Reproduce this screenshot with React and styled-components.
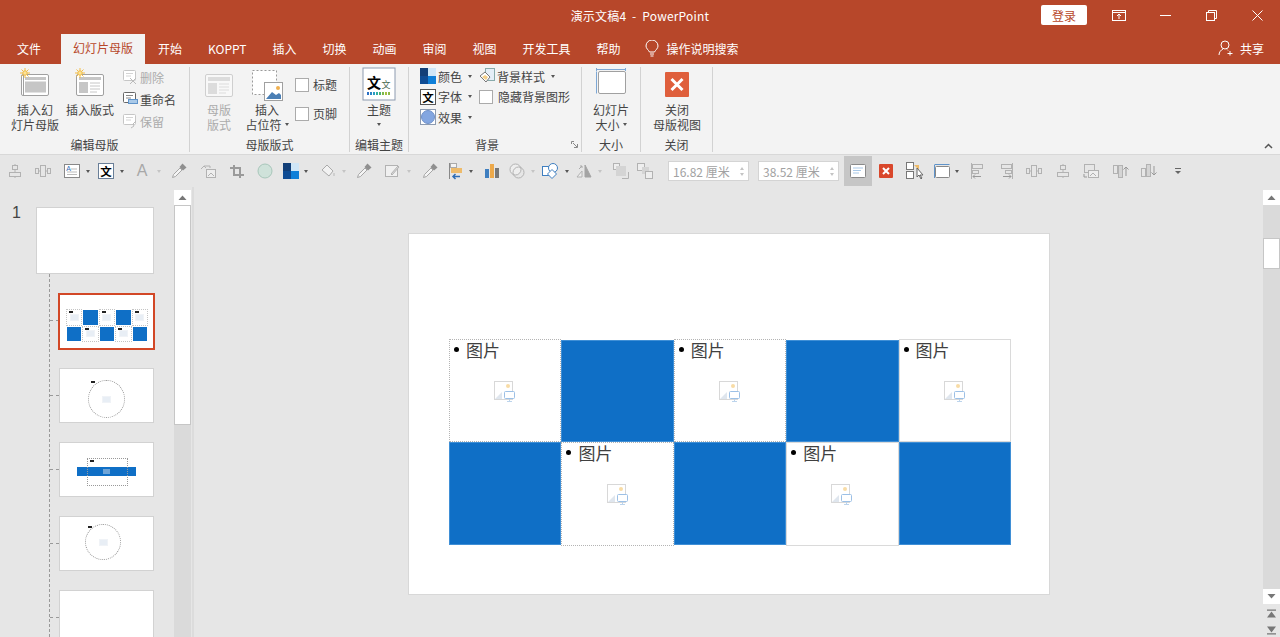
import React from "react";
import styled, { createGlobalStyle } from "styled-components";

const GlobalStyle = createGlobalStyle`
  html, body { margin: 0; padding: 0; height: 100%; overflow: hidden; }
  body { font-family: "Noto Sans CJK SC", "Liberation Sans", sans-serif; font-size: 12px; color: #444; background: #e6e6e6; }
  svg { display: block; flex: none; }
`;

const RED = "#B7472A";
const BLUE = "#0F6FC6";

const Window = styled.div`
  width: 1280px;
  height: 637px;
  display: flex;
  flex-direction: column;
  overflow: hidden;
`;

/* title bar */
const TitleBar = styled.header`
  height: 35px;
  background: ${RED};
  display: grid;
  grid-template-columns: 1fr auto 1fr;
  align-items: center;
  color: #fff;
`;
const Title = styled.div`
  font-size: 12px;
  white-space: pre;
  letter-spacing: 0.2px;
  padding-bottom: 4px;
`;
const WindowControls = styled.div`
  display: flex;
  justify-content: flex-end;
  align-items: flex-start;
  align-self: start;
`;
const LoginButton = styled.button`
  width: 46px;
  height: 20px;
  margin: 5px 9px 0 0;
  padding: 0;
  border: 0;
  border-radius: 2px;
  background: #fff;
  color: ${RED};
  font: inherit;
`;
const ControlButton = styled.div`
  width: 46px;
  height: 30px;
  display: flex;
  align-items: center;
  justify-content: center;
`;

/* tabs */
const TabBar = styled.nav`
  height: 29px;
  background: ${RED};
  display: flex;
  align-items: stretch;
  color: #fff;
`;
const Tab = styled.div`
  padding: 0 ${(p) => p.$pad || 13}px 3px ${(p) => p.$left || p.$pad || 13}px;
  display: flex;
  align-items: center;
  gap: 8px;
  white-space: nowrap;
  ${(p) => p.$active && `background: #f3f3f3; color: ${RED}; margin-top: -1px;`}
`;
const TabSpacer = styled.div`
  flex: 1;
`;
const ShareLabel = styled.span`
  margin-left: -2px;
`;

/* ribbon */
const Ribbon = styled.section`
  height: 90px;
  background: #f3f3f3;
  display: flex;
  padding-top: 3px;
  box-sizing: border-box;
  position: relative;
`;
const Group = styled.div`
  width: ${(p) => p.$w}px;
  height: 85px;
  box-sizing: border-box;
  border-right: 1px solid #d2d2d2;
  display: flex;
  flex-direction: column;
`;
const GroupBody = styled.div`
  flex: 1;
  display: flex;
  padding-left: ${(p) => p.$left || 0}px;
  gap: ${(p) => p.$gap || 0}px;
`;
const GroupLabel = styled.div`
  height: 18px;
  line-height: 21px;
  text-align: center;
  color: #444;
  position: relative;
  padding-right: ${(p) => p.$right || 0}px;
`;
const Launcher = styled.span`
  position: absolute;
  right: 3px;
  top: 7px;
`;
const LargeButton = styled.div`
  width: ${(p) => p.$w}px;
  display: flex;
  flex-direction: column;
  align-items: center;
  line-height: 15px;
  text-align: center;
  white-space: nowrap;
  color: ${(p) => (p.$off ? "#ababab" : "#444")};
`;
const ButtonLabel = styled.div`
  display: flex;
  flex-direction: column;
  align-items: center;
`;
const LabelLine = styled.span`
  display: inline-flex;
  align-items: center;
  gap: 3px;
  height: 15px;
`;
const SmallColumn = styled.div`
  display: flex;
  flex-direction: column;
  margin-left: ${(p) => p.$left || 0}px;
  margin-top: ${(p) => p.$raise || 0}px;
  padding-top: ${(p) => p.$top || 0}px;
  gap: ${(p) => p.$gap || 0}px;
`;
const SmallRow = styled.div`
  height: ${(p) => p.$h || 21}px;
  display: flex;
  align-items: center;
  gap: ${(p) => p.$gap || 2}px;
  white-space: nowrap;
  color: ${(p) => (p.$off ? "#ababab" : "#444")};
`;
const Checkbox = styled.span`
  width: 12px;
  height: 12px;
  display: block;
  flex: none;
  background: #fff;
  border: 1px solid #ababab;
`;
const Caret = styled.i`
  width: 0;
  height: 0;
  display: block;
  flex: none;
  border-left: 2.5px solid transparent;
  border-right: 2.5px solid transparent;
  border-top: 3px solid ${(p) => p.$color || "#555"};
`;
const RowCaret = styled(Caret)`
  margin-left: 4px;
`;
const Collapse = styled.span`
  position: absolute;
  right: 7px;
  bottom: 5px;
`;

/* quick toolbar */
const Toolbar = styled.div`
  height: 33px;
  box-sizing: border-box;
  background: #e6e6e6;
  border-top: 1px solid #d8d8d8;
  display: flex;
  align-items: center;
`;
const Tool = styled.div`
  width: ${(p) => p.$w}px;
  margin-left: ${(p) => p.$gap}px;
  height: 18px;
  display: flex;
  align-items: center;
  justify-content: center;
  flex: none;
`;
const ActiveTool = styled(Tool)`
  height: 30px;
  background: #c6c6c6;
`;
const LetterTool = styled.span`
  font-family: "Liberation Sans", sans-serif;
  font-size: 16px;
  color: #a8a8a8;
`;
const SizeInput = styled.div`
  width: 100%;
  height: 20px;
  box-sizing: border-box;
  background: #fff;
  border: 1px solid #d4d4d4;
  color: #a2a2a2;
  padding: 0 4px;
  display: flex;
  align-items: center;
  justify-content: space-between;
  white-space: nowrap;
`;
const Spinner = styled.span`
  display: flex;
  flex-direction: column;
  gap: 3px;
`;
const SpinUp = styled(Caret)`
  transform: rotate(180deg);
`;

/* main area */
const Main = styled.main`
  flex: 1;
  min-height: 0;
  display: flex;
  background: #e6e6e6;
`;
const Sidebar = styled.aside`
  width: 194px;
  flex: none;
  box-sizing: border-box;
  border-right: 2px solid #dcdcdc;
  display: flex;
  position: relative;
  overflow: hidden;
`;
const ThumbList = styled.div`
  width: 174px;
  flex: none;
  padding-top: 20px;
  display: flex;
  flex-direction: column;
  position: relative;
`;
const MasterRow = styled.div`
  display: flex;
  height: 87px;
  flex: none;
`;
const SlideNo = styled.div`
  width: 36px;
  box-sizing: border-box;
  padding: 1px 0 0 12px;
  font-family: "Liberation Sans", sans-serif;
  font-size: 16px;
  line-height: 10px;
  color: #444;
`;
const MasterThumb = styled.div`
  width: 118px;
  height: 67px;
  box-sizing: border-box;
  background: #fff;
  border: 1px solid #d2d2d2;
`;
const TreeLine = styled.div`
  position: absolute;
  left: 49px;
  top: 87px;
  bottom: 0;
  border-left: 1px dashed #999;
`;
const LayoutRow = styled.div`
  height: ${(p) => (p.$selected ? 75 : 74)}px;
  padding-left: ${(p) => (p.$selected ? 58 : 59)}px;
  margin-top: ${(p) => (p.$selected ? -1 : 0)}px;
  flex: none;
  position: relative;
  &::before {
    content: "";
    position: absolute;
    left: 50px;
    top: 27px;
    width: 9px;
    border-top: 1px dashed #999;
  }
`;
const LayoutThumb = styled.div`
  width: ${(p) => (p.$selected ? 97 : 95)}px;
  height: ${(p) => (p.$selected ? 57 : 55)}px;
  box-sizing: border-box;
  background: #fff;
  border: ${(p) => (p.$selected ? "2px solid #D24726" : "1px solid #d2d2d2")};
  position: relative;
  overflow: hidden;
`;
const MiniGrid = styled.div`
  position: absolute;
  left: 6px;
  top: 14px;
  width: 82px;
  height: 33px;
  display: grid;
  grid-template-columns: repeat(5, 1fr);
  grid-template-rows: repeat(2, 1fr);
`;
const MiniCell = styled.div`
  box-sizing: border-box;
  background: ${(p) => (p.$blue ? BLUE : "#fff")};
  border: ${(p) => (p.$blue ? "0" : "1px dotted #c4c4c4")};
  margin: ${(p) => (p.$blue ? "1px" : "0")};
  position: relative;
  display: flex;
  align-items: center;
  justify-content: center;
`;
const MiniTag = styled.span`
  position: absolute;
  width: 4px;
  height: 2px;
  background: #222;
  left: ${(p) => p.$x}px;
  top: ${(p) => p.$y}px;
`;
const MiniPic = styled.span`
  width: 7px;
  height: 5px;
  display: block;
  background: #e8eef5;
  border: 1px solid #f0f3f7;
`;
const MiniShape = styled.div`
  position: absolute;
  left: ${(p) => p.$x}px;
  top: ${(p) => p.$y}px;
  width: ${(p) => p.$w}px;
  height: ${(p) => p.$h}px;
  box-sizing: border-box;
  display: flex;
  align-items: center;
  justify-content: center;
  border: 1px dotted #999;
  border-radius: ${(p) => (p.$round ? "50%" : "0")};
`;
const MiniBar = styled(MiniShape)`
  border: 0;
  background: ${BLUE};
`;
const MiniBarPic = styled.span`
  width: 7px;
  height: 5px;
  display: block;
  background: #6fa5d8;
`;
const Scrollbar = styled.div`
  width: ${(p) => p.$w}px;
  flex: none;
  padding-top: 3px;
  display: flex;
  flex-direction: column;
`;
const ScrollButton = styled.div`
  height: 15px;
  flex: none;
  background: #fff;
  display: flex;
  align-items: center;
  justify-content: center;
`;
const ScrollTrack = styled.div`
  background: #dadada;
  flex: ${(p) => (p.$fill ? 1 : "none")};
  height: ${(p) => (p.$h ? `${p.$h}px` : "auto")};
`;
const ScrollThumb = styled.div`
  height: ${(p) => p.$h}px;
  flex: none;
  box-sizing: border-box;
  background: #fff;
  border: 1px solid #c6c6c6;
`;
const PageButton = styled.div`
  height: ${(p) => p.$h}px;
  flex: none;
  display: flex;
  align-items: center;
  justify-content: center;
`;
const Workspace = styled.div`
  flex: 1;
  min-width: 0;
  padding: 46px 0 0 214px;
`;
const Slide = styled.div`
  width: 642px;
  height: 362px;
  box-sizing: border-box;
  background: #fff;
  border: 1px solid #d8d8d8;
  padding: 105px 0 0 40px;
`;
const SlideGrid = styled.div`
  width: 562px;
  display: grid;
  grid-template-columns: repeat(5, 112.4px);
  grid-template-rows: 103px 104px;
`;
const BlueCell = styled.div`
  background: ${BLUE};
  border: 1px solid #3f8fd6;
  margin-top: ${(p) => p.$top || 0}px;
  margin-bottom: ${(p) => p.$bottom || 0}px;
  box-sizing: border-box;
`;
const PictureCell = styled.div`
  box-sizing: border-box;
  border: 1px ${(p) => (p.$solid ? "solid #dadada" : "dotted #b4b4b4")};
  display: flex;
  flex-direction: column;
  align-items: center;
`;
const PictureLabel = styled.div`
  align-self: stretch;
  height: 18px;
  padding-left: 4px;
  display: flex;
  align-items: center;
  gap: 7px;
  font-size: 17px;
  color: #404040;
  white-space: nowrap;
`;
const Bullet = styled.i`
  width: 5px;
  height: 5px;
  display: block;
  border-radius: 50%;
  background: #000;
`;
const PictureIcon = styled.div`
  margin-top: 23px;
`;

const Sun = ({ x = 7, y = 6 }) => (
  <g stroke="#f2bd48" strokeWidth="1">
    <path d={`M${x - 5} ${y}h10M${x} ${y - 5}v10M${x - 3.5} ${y - 3.5}l7 7M${x + 3.5} ${y - 3.5}l-7 7`} />
    <circle cx={x} cy={y} r="2.2" fill="#fbe39a" />
  </g>
);

const MasterIcon = () => (
  <svg width="34" height="35" viewBox="0 0 34 35">
    <rect x="3.5" y="7.5" width="27" height="21" rx="1.5" fill="#fff" stroke="#a0a0a0" />
    <path d="M5.5 8v20" stroke="#a0a0a0" />
    <rect x="7" y="10" width="21" height="3" fill="#c6c6c6" />
    <rect x="7" y="14.5" width="21" height="11" fill="#c6c6c6" />
    <Sun />
  </svg>
);
const LayoutIcon = () => (
  <svg width="34" height="35" viewBox="0 0 34 35">
    <rect x="3.5" y="7.5" width="27" height="21" rx="1.5" fill="#fff" stroke="#a0a0a0" />
    <rect x="6" y="10" width="22" height="3" fill="#c6c6c6" />
    <rect x="6" y="15" width="9" height="11" fill="#c6c6c6" />
    <path d="M17 16h10M17 19h10M17 22h10M17 25h7" stroke="#c6c6c6" />
    <Sun />
  </svg>
);
const MasterLayoutIcon = () => (
  <svg width="34" height="35" viewBox="0 0 34 35">
    <rect x="3.5" y="7.5" width="27" height="22" rx="1.5" fill="#f8f8f8" stroke="#cfcfcf" />
    <rect x="6" y="10" width="22" height="4" fill="#dcdcdc" />
    <rect x="6" y="16" width="9" height="11" fill="#dcdcdc" />
    <path d="M17 17h10M17 20h10M17 23h10M17 26h7" stroke="#dcdcdc" />
  </svg>
);
const PlaceholderIcon = () => (
  <svg width="36" height="35" viewBox="0 0 36 35">
    <rect x="3.5" y="3.5" width="24" height="24" fill="#fff" stroke="#9a9a9a" strokeDasharray="2 2" />
    <rect x="15.5" y="15.5" width="18" height="18" fill="#fff" stroke="#a0a0a0" />
    <path d="M17 32l6-7 4 3 3-2 2 2v4z" fill="#4a7fb5" />
    <circle cx="29" cy="21" r="2" fill="#f0b050" />
  </svg>
);
const ThemeIcon = () => (
  <svg width="34" height="35" viewBox="0 0 34 35">
    <rect x="1" y="1" width="32" height="32" fill="#fff" stroke="#8d9bb0" />
    <text x="12" y="21" fontSize="14" fontWeight="700" fill="#000" textAnchor="middle" fontFamily="Noto Sans CJK SC">文</text>
    <text x="24" y="21" fontSize="9" fill="#4a6a50" textAnchor="middle" fontFamily="Noto Sans CJK SC">文</text>
    {["#2a6fc4", "#2a86c4", "#2a9cc4", "#30b0a0", "#4cb070", "#7cb84a", "#a4c040", "#8cb84a"].map((c, i) => (
      <rect key={i} x={5 + i * 3} y="25" width="2" height="3" fill={c} />
    ))}
  </svg>
);
const SizeIcon = () => (
  <svg width="34" height="35" viewBox="0 0 34 35">
    <path d="M2.5 2.5h29M2.5 1v3M31.5 1v3M2.5 4.5v22" stroke="#7da7d4" />
    <rect x="4.5" y="4.5" width="27" height="22" rx="1.5" fill="#fff" stroke="#a0a0a0" />
  </svg>
);
const CloseMasterIcon = () => (
  <svg width="34" height="35" viewBox="0 0 34 35">
    <rect x="5" y="5" width="24" height="25" rx="1" fill="#DF5F3C" />
    <path d="M11.5 12l11 11M22.5 12l-11 11" stroke="#fff" strokeWidth="3" />
  </svg>
);

const SmallSlide = ({ off, children }) => (
  <svg width="16" height="16" viewBox="0 0 16 16">
    <rect x="1.5" y="1.5" width="12" height="10" rx="1" fill="#fff" stroke={off ? "#c6c6c6" : "#666"} />
    <path d="M4 4.5h7M4 7h5" stroke={off ? "#d4d4d4" : "#888"} />
    {children}
  </svg>
);
const ColorsIcon = ({ size = 16 }) => (
  <svg width={size} height={size} viewBox="0 0 16 16">
    <rect width="8" height="8" fill="#123f78" />
    <rect x="8" width="8" height="8" fill="#cfe6f7" />
    <rect y="8" width="8" height="8" fill="#0f4c94" />
    <rect x="8" y="8" width="8" height="8" fill="#0f7fd8" />
  </svg>
);
const FontBoxIcon = ({ stroke = "#555" }) => (
  <svg width="16" height="16" viewBox="0 0 16 16">
    <rect x="0.5" y="0.5" width="15" height="15" fill="#fff" stroke={stroke} />
    <text x="8" y="12.5" fontSize="11.500" fontWeight="700" fill="#000" textAnchor="middle" fontFamily="Noto Sans CJK SC">文</text>
  </svg>
);
const EffectsIcon = () => (
  <svg width="16" height="16" viewBox="0 0 16 16">
    <rect x="0.5" y="0.5" width="15" height="15" fill="#fff" stroke="#8d9bb0" />
    <circle cx="8" cy="8" r="6.5" fill="#83a6e0" stroke="#6f90c8" />
  </svg>
);
const BackgroundIcon = () => (
  <svg width="16" height="16" viewBox="0 0 16 16">
    <rect x="6.5" y="0.5" width="9" height="12" fill="#e4eef7" stroke="#8aa" />
    <path d="M1 8l5-4 5 5-4 5z" fill="#fff" stroke="#777" />
    <path d="M3 9l3-2 3 2-2 3z" fill="#f3cf8a" />
  </svg>
);

const Pipette = ({ color = "#a6a6a6" }) => (
  <svg width="16" height="16" viewBox="0 0 16 16">
    <path d="M1.500 14.500l1-3 6.500-6.500 2 2-6.500 6.500z" fill="#f4f4f4" stroke={color} />
    <path d="M8.500 4l3-3.500 4 4L12 7.500z" fill="#8f8f8f" />
  </svg>
);
const G = "#b2b2b2";
const ToolSvg = ({ children, w = 16 }) => (
  <svg width={w} height="16" viewBox={`0 0 ${w} 16`} fill="none" stroke={G}>
    {children}
  </svg>
);
const tb = {
  alignV: (
    <ToolSvg><path d="M8 1v14" /><rect x="5.500" y="2.500" width="5" height="4" fill="#e6e6e6" /><rect x="2.500" y="9.500" width="11" height="4" fill="#e6e6e6" /></ToolSvg>
  ),
  distH: (
    <ToolSvg><path d="M4 8h8" /><rect x="0.500" y="5.500" width="3" height="5" fill="#e6e6e6" /><rect x="5.500" y="2.500" width="5" height="11" fill="#e6e6e6" /><rect x="12.500" y="5.500" width="3" height="5" fill="#e6e6e6" /></ToolSvg>
  ),
  alignL: (
    <ToolSvg><path d="M1.500 0v16" /><rect x="2.500" y="1.500" width="10" height="4" fill="#e6e6e6" /><rect x="2.500" y="7.500" width="6" height="3" fill="#e6e6e6" /><path d="M11 13.500H3M5 11.500l-2 2 2 2" stroke="#999" /></ToolSvg>
  ),
  alignR: (
    <ToolSvg><path d="M14.500 0v16" /><rect x="3.500" y="1.500" width="10" height="4" fill="#e6e6e6" /><rect x="7.500" y="7.500" width="6" height="3" fill="#e6e6e6" /><path d="M5 13.500h8M11 11.500l2 2-2 2" stroke="#999" /></ToolSvg>
  ),
  textBox: (
    <svg width="16" height="14" viewBox="0 0 16 14">
      <rect x="0.500" y="0.500" width="15" height="13" fill="#fff" stroke="#888" />
      <path d="M7 5h6M3 8h10M3 10.500h10" stroke="#bbb" />
      <text x="4.500" y="6.500" fontSize="7" fill="#2f6db5" textAnchor="middle" fontFamily="Liberation Sans">A</text>
    </svg>
  ),
  rotateImg: (
    <ToolSvg><path d="M1 6l3-3 2 2" /><path d="M4 3h6v2" /><rect x="6.500" y="6.500" width="9" height="8" fill="#eee" /><path d="M8 13l3-3 3 3" /></ToolSvg>
  ),
  crop: (
    <svg width="16" height="16" viewBox="0 0 16 16" fill="none" stroke="#9a9a9a" strokeWidth="2"><path d="M5 2v10h10M1 5h10v10" /></svg>
  ),
  circle: (
    <svg width="16" height="16" viewBox="0 0 16 16"><circle cx="8" cy="8" r="7" fill="#cfe2da" stroke="#a8c6ba" /></svg>
  ),
  bucket: (
    <ToolSvg><path d="M2 7l5-5 6 6-4 5z" fill="#f2f2f2" stroke="#aaa" /><path d="M14 10v3" stroke="#cfcfcf" strokeWidth="2" /></ToolSvg>
  ),
  edit: (
    <ToolSvg><rect x="1.500" y="2.500" width="12" height="11" fill="#f0f0f0" /><path d="M7 11l7-8 1 1-7 8z" fill="#ddd" /></ToolSvg>
  ),
  arrange: (
    <svg width="16" height="18" viewBox="0 0 16 18"><path d="M1.500 1v16" stroke="#888" /><rect x="2.500" y="1.500" width="6" height="4" fill="#f4f4f4" stroke="#aaa" /><rect x="3" y="6" width="11" height="5" fill="#eebb6a" /><path d="M12 14.500H5M7.500 12l-2.500 2.500 2.500 2.500" stroke="#2f6db5" strokeWidth="1.500" fill="none" /></svg>
  ),
  chart: (
    <svg width="16" height="16" viewBox="0 0 16 16"><rect x="1" y="6" width="4" height="9" fill="#3f7fc0" /><rect x="6" y="1" width="4" height="14" fill="#eda94a" /><rect x="11" y="5" width="4" height="10" fill="#777" /></svg>
  ),
  circles: (
    <ToolSvg><circle cx="6.500" cy="6.500" r="5.500" fill="#eee" /><circle cx="9.500" cy="9.500" r="5.500" /></ToolSvg>
  ),
  shapes: (
    <svg width="16" height="16" viewBox="0 0 16 16" fill="#fff" stroke="#3f7fc0"><rect x="0.500" y="3.500" width="9" height="9" /><circle cx="11" cy="5" r="4.500" /><path d="M10 6.500l4.500 4.500-4.500 4.500-4.500-4.500z" /></svg>
  ),
  triangles: (
    <ToolSvg><path d="M1 14l5-6v6z" fill="#eee" /><path d="M3 6l3-3M4 3h2v2" stroke="#aaa" /><path d="M9 2l6 12H9z" fill="#a4a4a4" stroke="#a4a4a4" /></ToolSvg>
  ),
  group: (
    <ToolSvg><rect x="0.500" y="0.500" width="6" height="6" fill="#eee" /><rect x="3.500" y="3.500" width="9" height="9" fill="#d4d4d4" stroke="#d4d4d4" /><path d="M15.500 9v6.500H9" /></ToolSvg>
  ),
  ungroup: (
    <ToolSvg><rect x="0.500" y="0.500" width="7" height="7" fill="#eee" /><rect x="5.500" y="4.500" width="6" height="6" fill="#d4d4d4" stroke="#d4d4d4" /><rect x="8.500" y="8.500" width="7" height="7" fill="#eee" /></ToolSvg>
  ),
  activePane: (
    <svg width="16" height="14" viewBox="0 0 16 14"><rect x="0.500" y="0.500" width="15" height="13" rx="1" fill="#fff" stroke="#8a8a8a" /><path d="M3 4h10M3 6.500h8M3 9h6" stroke="#a9c9e8" /></svg>
  ),
  closeRed: (
    <svg width="14" height="14" viewBox="0 0 14 14"><rect width="14" height="14" rx="1" fill="#D9472B" /><path d="M4 4l6 6M10 4l-6 6" stroke="#fff" strokeWidth="2" /></svg>
  ),
  selection: (
    <svg width="18" height="18" viewBox="0 0 18 18"><rect x="0.500" y="0.500" width="7" height="7" fill="#fff" stroke="#777" /><rect x="0.500" y="9.500" width="7" height="7" fill="#fff" stroke="#777" /><path d="M8 3h5v5z" fill="#eebb6a" /><path d="M11 6v9l2-2 2 4 1-1-2-3h3z" fill="#fff" stroke="#666" /></svg>
  ),
  slideSize: (
    <svg width="16" height="14" viewBox="0 0 16 14"><path d="M0.500 0.500h15M0.500 1v13" stroke="#5f93c9" /><rect x="1.500" y="2.500" width="14" height="11" rx="1" fill="#fff" stroke="#888" /></svg>
  ),
  swapImg: (
    <ToolSvg><rect x="1.500" y="1.500" width="10" height="8" /><rect x="5.500" y="7.500" width="10" height="7" fill="#eee" /><path d="M7 13l3-3 3 3" /><path d="M1 11v3h3" stroke="#999" /></ToolSvg>
  ),
  sendUp: (
    <ToolSvg><rect x="0.500" y="2.500" width="4" height="8" /><rect x="5.500" y="2.500" width="4" height="12" fill="#d4d4d4" /><path d="M13 13V4M10.500 6.500L13 4l2.500 2.500" stroke="#999" /></ToolSvg>
  ),
  sendDown: (
    <ToolSvg><rect x="0.500" y="5.500" width="4" height="8" /><rect x="5.500" y="1.500" width="4" height="12" fill="#d4d4d4" /><path d="M13 3v9M10.500 9.500L13 12l2.500-2.500" stroke="#999" /></ToolSvg>
  ),
  more: (
    <svg width="8" height="8" viewBox="0 0 8 8"><path d="M1 1.500h6" stroke="#666" /><path d="M1 4h6L4 7z" fill="#666" /></svg>
  ),
};

const caret = <Caret />;
const paleCaret = <Caret $color="#c4c4c4" />;

// center x and width of everything on the quick toolbar, left to right
const tools = [
  [15, 16, tb.alignV], [43, 16, tb.distH], [72, 16, tb.textBox], [88, 6, caret], [106, 16, <FontBoxIcon stroke="#6a7f98" />], [122, 6, caret],
  [142, 14, <LetterTool>A</LetterTool>], [159, 6, paleCaret], [179, 16, <Pipette />], [208, 16, tb.rotateImg],
  [237, 16, tb.crop], [265, 16, tb.circle], [291, 16, <ColorsIcon />], [306, 6, caret], [328, 16, tb.bucket],
  [344, 6, paleCaret], [364, 16, <Pipette />], [392, 16, tb.edit], [409, 6, paleCaret], [430, 16, <Pipette />],
  [456, 16, tb.arrange], [471, 6, caret], [492, 16, tb.chart], [517, 16, tb.circles], [533, 6, paleCaret],
  [550, 16, tb.shapes], [567, 6, caret], [584, 16, tb.triangles], [600, 6, paleCaret], [621, 16, tb.group], [645, 16, tb.ungroup],
];
const toolsAfter = [
  [886, 16, tb.closeRed], [915, 18, tb.selection], [942, 16, tb.slideSize], [957, 6, caret], [978, 16, tb.alignL],
  [1006, 16, tb.alignR], [1034, 16, tb.distH], [1063, 16, tb.alignV], [1091, 16, tb.swapImg], [1121, 16, tb.sendUp],
  [1149, 16, tb.sendDown], [1178, 8, tb.more],
];

const withGaps = (list, start) => {
  let right = start;
  return list.map(([c, w, icon]) => {
    const gap = c - w / 2 - right;
    right = c + w / 2;
    return { gap, w, icon };
  });
};

const PictureGlyph = () => (
  <svg width="22" height="21" viewBox="0 0 22 21">
    <rect x="0.500" y="0.500" width="18" height="18" fill="#fff" stroke="#d8d8d8" />
    <path d="M1 18l7-7v7z" fill="#dfe6ee" />
    <circle cx="14" cy="5" r="2" fill="#f8dca6" />
    <rect x="10.500" y="10.500" width="10" height="7" rx="1" fill="#fff" stroke="#9cc0e6" />
    <path d="M15.500 18v2M13 20.500h5" stroke="#bcd4ec" />
  </svg>
);

const Picture = ({ solid }) => (
  <PictureCell $solid={solid}>
    <PictureLabel><Bullet />图片</PictureLabel>
    <PictureIcon><PictureGlyph /></PictureIcon>
  </PictureCell>
);

const UpArrow = ({ color = "#777" }) => (
  <svg width="9" height="5" viewBox="0 0 9 5"><path d="M0.500 5L4.500 0.500 8.500 5z" fill={color} /></svg>
);
const DownArrow = () => (
  <svg width="9" height="5" viewBox="0 0 9 5"><path d="M0.500 0L4.500 4.500 8.500 0z" fill="#777" /></svg>
);

const miniCells = [0, 1, 0, 1, 0, 1, 0, 1, 0, 1];

const App = () => {
  return (
    <Window>
      <GlobalStyle />
      <TitleBar>
        <span />
        <Title>演示文稿4  -  PowerPoint</Title>
        <WindowControls>
          <LoginButton>登录</LoginButton>
          <ControlButton>
            <svg width="14" height="11" viewBox="0 0 14 11" fill="none" stroke="#fff"><rect x="0.500" y="0.500" width="13" height="10" /><path d="M1 2.500h12M7 9V4.500M5 6l2-2 2 2" /></svg>
          </ControlButton>
          <ControlButton>
            <svg width="11" height="1" viewBox="0 0 11 1"><path d="M0 0.500h11" stroke="#fff" /></svg>
          </ControlButton>
          <ControlButton>
            <svg width="11" height="11" viewBox="0 0 11 11" fill="none" stroke="#fff"><rect x="0.500" y="2.500" width="8" height="8" /><path d="M2.500 2.500v-2h8v8h-2" /></svg>
          </ControlButton>
          <ControlButton>
            <svg width="11" height="11" viewBox="0 0 11 11" stroke="#fff"><path d="M0.500 0.500l10 10M10.500 0.500l-10 10" /></svg>
          </ControlButton>
        </WindowControls>
      </TitleBar>

      <TabBar>
        <Tab $left={17} $pad={20}>文件</Tab>
        <Tab $active $pad={12}>幻灯片母版</Tab>
        <Tab>开始</Tab>
        <Tab>KOPPT</Tab>
        <Tab>插入</Tab>
        <Tab>切换</Tab>
        <Tab>动画</Tab>
        <Tab>审阅</Tab>
        <Tab>视图</Tab>
        <Tab>开发工具</Tab>
        <Tab>帮助</Tab>
        <Tab $left={11}>
          <svg width="14" height="17" viewBox="0 0 14 17" fill="none" stroke="#fff"><path d="M4.500 12C3.500 10 1 8.500 1 6a6 6 0 0 1 12 0c0 2.500-2.500 4-3.500 6zM5 14h4M5.500 16h3" /></svg>
          操作说明搜索
        </Tab>
        <TabSpacer />
        <Tab $pad={16}>
          <svg width="16" height="16" viewBox="0 0 16 16" fill="none" stroke="#fff"><circle cx="7" cy="5" r="4" /><path d="M1 15c0-3 2-5 4-6M9 9.500l1 1M12 11v4.500M9.500 13.500h5" /></svg>
          <ShareLabel>共享</ShareLabel>
        </Tab>
      </TabBar>

      <Ribbon>
        <Group $w={190}>
          <GroupBody $left={8}>
            <LargeButton $w={54}>
              <MasterIcon />
              <ButtonLabel><LabelLine>插入幻</LabelLine><LabelLine>灯片母版</LabelLine></ButtonLabel>
            </LargeButton>
            <LargeButton $w={56}>
              <LayoutIcon />
              <ButtonLabel><LabelLine>插入版式</LabelLine></ButtonLabel>
            </LargeButton>
            <SmallColumn $left={4} $raise={-1}>
              <SmallRow $h={22} $off><SmallSlide off><path d="M8 9l6 6M14 9l-6 6" stroke="#bbb" /></SmallSlide>删除</SmallRow>
              <SmallRow $h={22}><SmallSlide><rect x="6.500" y="8.500" width="9" height="4" fill="#a9c9e8" stroke="#5f93c9" /></SmallSlide>重命名</SmallRow>
              <SmallRow $h={22} $off><SmallSlide off><path d="M14 8l-3 3 1 2-3 2" stroke="#bbb" fill="none" /></SmallSlide>保留</SmallRow>
            </SmallColumn>
          </GroupBody>
          <GroupLabel>编辑母版</GroupLabel>
        </Group>

        <Group $w={160}>
          <GroupBody $left={4}>
            <LargeButton $w={50} $off>
              <MasterLayoutIcon />
              <ButtonLabel><LabelLine>母版</LabelLine><LabelLine>版式</LabelLine></ButtonLabel>
            </LargeButton>
            <LargeButton $w={46}>
              <PlaceholderIcon />
              <ButtonLabel><LabelLine>插入</LabelLine><LabelLine>占位符<Caret /></LabelLine></ButtonLabel>
            </LargeButton>
            <SmallColumn $top={7} $gap={8} $left={5}>
              <SmallRow $gap={4}><Checkbox />标题</SmallRow>
              <SmallRow $gap={4}><Checkbox />页脚</SmallRow>
            </SmallColumn>
          </GroupBody>
          <GroupLabel>母版版式</GroupLabel>
        </Group>

        <Group $w={59}>
          <GroupBody $left={12}>
            <LargeButton $w={34}>
              <ThemeIcon />
              <ButtonLabel><LabelLine>主题</LabelLine><LabelLine><Caret /></LabelLine></ButtonLabel>
            </LargeButton>
          </GroupBody>
          <GroupLabel>编辑主题</GroupLabel>
        </Group>

        <Group $w={173}>
          <GroupBody $left={11} $gap={7}>
            <SmallColumn $raise={-1}>
              <SmallRow $h={20.5}><ColorsIcon />颜色<RowCaret /></SmallRow>
              <SmallRow $h={20.5}><FontBoxIcon />字体<RowCaret /></SmallRow>
              <SmallRow $h={20.5}><EffectsIcon />效果<RowCaret /></SmallRow>
            </SmallColumn>
            <SmallColumn $raise={-1}>
              <SmallRow $h={20.5}><BackgroundIcon />背景样式<RowCaret /></SmallRow>
              <SmallRow $h={20.5} $gap={5}><Checkbox />隐藏背景图形</SmallRow>
            </SmallColumn>
          </GroupBody>
          <GroupLabel $right={16}>
            背景
            <Launcher>
              <svg width="7" height="7" viewBox="0 0 7 7" fill="none" stroke="#888"><path d="M0.500 3V0.500H3M2 2l4 4M6.500 3v3.500H3" /></svg>
            </Launcher>
          </GroupLabel>
        </Group>

        <Group $w={59}>
          <GroupBody $left={12}>
            <LargeButton $w={34}>
              <SizeIcon />
              <ButtonLabel><LabelLine>幻灯片</LabelLine><LabelLine>大小<Caret /></LabelLine></ButtonLabel>
            </LargeButton>
          </GroupBody>
          <GroupLabel>大小</GroupLabel>
        </Group>

        <Group $w={72}>
          <GroupBody $left={19}>
            <LargeButton $w={34}>
              <CloseMasterIcon />
              <ButtonLabel><LabelLine>关闭</LabelLine><LabelLine>母版视图</LabelLine></ButtonLabel>
            </LargeButton>
          </GroupBody>
          <GroupLabel>关闭</GroupLabel>
        </Group>

        <Collapse>
          <svg width="9" height="6" viewBox="0 0 9 6" fill="none" stroke="#555" strokeWidth="1.500"><path d="M1 5l3.500-3.500L8 5" /></svg>
        </Collapse>
      </Ribbon>

      <Toolbar>
        {withGaps(tools, 0).map((t, i) => (
          <Tool key={i} $w={t.w} $gap={t.gap}>{t.icon}</Tool>
        ))}
        <Tool $w={81} $gap={15}>
          <SizeInput>16.82 厘米<Spinner><SpinUp $color="#c4c4c4" /><Caret $color="#c4c4c4" /></Spinner></SizeInput>
        </Tool>
        <Tool $w={81} $gap={9}>
          <SizeInput>38.52 厘米<Spinner><SpinUp $color="#c4c4c4" /><Caret $color="#c4c4c4" /></Spinner></SizeInput>
        </Tool>
        <ActiveTool $w={28} $gap={5}>{tb.activePane}</ActiveTool>
        {withGaps(toolsAfter, 872).map((t, i) => (
          <Tool key={i} $w={t.w} $gap={t.gap}>{t.icon}</Tool>
        ))}
      </Toolbar>

      <Main>
        <Sidebar>
          <ThumbList>
            <MasterRow>
              <SlideNo>1</SlideNo>
              <MasterThumb />
            </MasterRow>
            <TreeLine />
            <LayoutRow $selected>
              <LayoutThumb $selected>
                <MiniGrid>
                  {miniCells.map((b, i) => (
                    <MiniCell key={i} $blue={!!b}>{!b && <MiniPic />}{!b && <MiniTag $x={2} $y={1} />}</MiniCell>
                  ))}
                </MiniGrid>
              </LayoutThumb>
            </LayoutRow>
            <LayoutRow>
              <LayoutThumb>
                <MiniShape $x={28} $y={11} $w={37} $h={38} $round><MiniPic /></MiniShape>
                <MiniTag $x={31} $y={12} />
              </LayoutThumb>
            </LayoutRow>
            <LayoutRow>
              <LayoutThumb>
                <MiniBar $x={17} $y={24} $w={59} $h={9}><MiniBarPic /></MiniBar>
                <MiniShape $x={27} $y={15} $w={41} $h={28} />
                <MiniTag $x={30} $y={17} />
              </LayoutThumb>
            </LayoutRow>
            <LayoutRow>
              <LayoutThumb>
                <MiniShape $x={25} $y={7} $w={36} $h={36} $round><MiniPic /></MiniShape>
                <MiniTag $x={28} $y={9} />
              </LayoutThumb>
            </LayoutRow>
            <LayoutRow>
              <LayoutThumb />
            </LayoutRow>
          </ThumbList>
          <Scrollbar $w={17}>
            <ScrollButton><UpArrow /></ScrollButton>
            <ScrollThumb $h={220} />
            <ScrollTrack $fill />
          </Scrollbar>
        </Sidebar>

        <Workspace>
          <Slide>
            <SlideGrid>
              <Picture />
              <BlueCell $top={1} />
              <Picture />
              <BlueCell $top={1} />
              <Picture solid />
              <BlueCell $bottom={1} />
              <Picture />
              <BlueCell $bottom={1} />
              <Picture solid />
              <BlueCell $bottom={1} />
            </SlideGrid>
          </Slide>
        </Workspace>

        <Scrollbar $w={17}>
          <ScrollButton><UpArrow /></ScrollButton>
          <ScrollTrack $h={33} />
          <ScrollThumb $h={31} />
          <ScrollTrack $fill />
          <ScrollButton><DownArrow /></ScrollButton>
          <PageButton $h={19}>
            <svg width="9" height="9" viewBox="0 0 9 9" fill="#777"><path d="M0 0.500h9v1.200H0zM4.500 2.500L9 8.500H0z" /></svg>
          </PageButton>
          <PageButton $h={14}>
            <svg width="9" height="9" viewBox="0 0 9 9" fill="#777"><path d="M0 8.500h9V7.300H0zM4.500 6.500L9 0.500H0z" /></svg>
          </PageButton>
        </Scrollbar>
      </Main>
    </Window>
  );
};

export default App;
